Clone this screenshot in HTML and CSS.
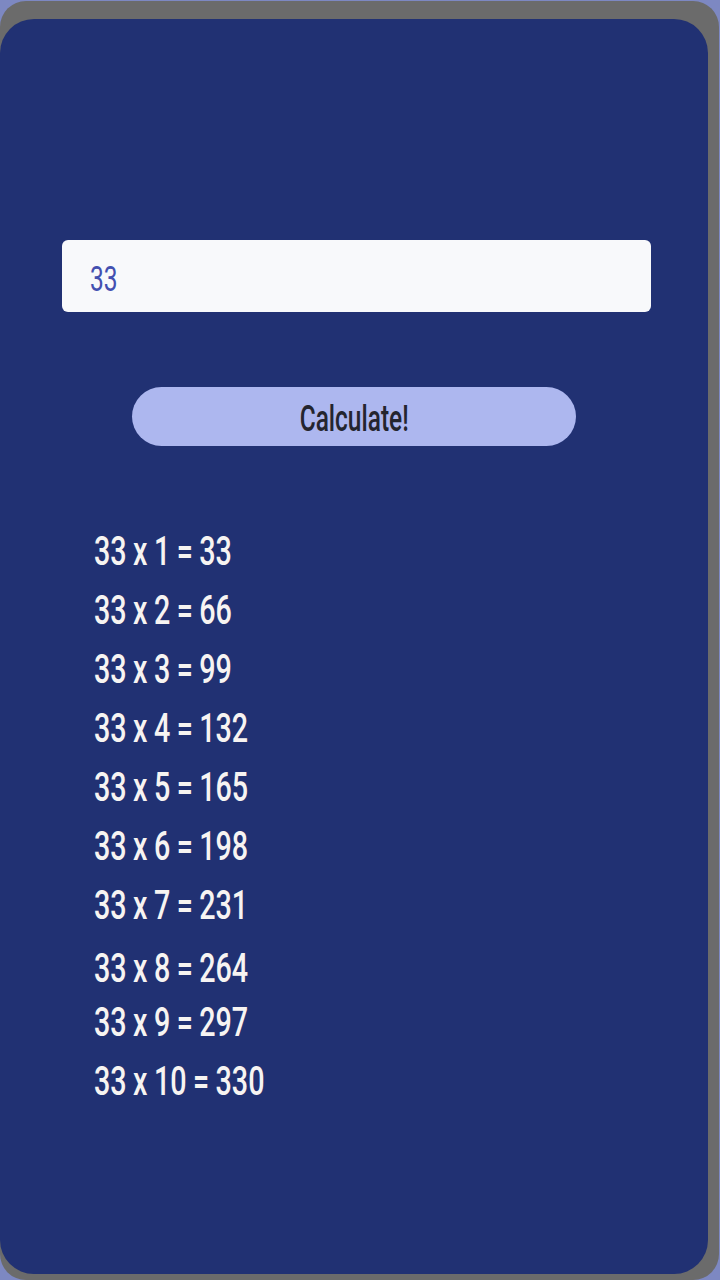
FILE: index.html
```html
<!DOCTYPE html>
<html>
<head>
<meta charset="utf-8">
<link rel="stylesheet" href="styles.css">
</head>
<body>
<div class="frame">
  <div class="screen">
    <div class="field"><span class="field-text">33</span></div>
    <button class="calc"><span class="calc-text">Calculate!</span></button>
    <ul class="results">
      <li><span>33 x 1 = 33</span></li>
      <li><span>33 x 2 = 66</span></li>
      <li><span>33 x 3 = 99</span></li>
      <li><span>33 x 4 = 132</span></li>
      <li><span>33 x 5 = 165</span></li>
      <li><span>33 x 6 = 198</span></li>
      <li><span>33 x 7 = 231</span></li>
      <li class="shift-down"><span>33 x 8 = 264</span></li>
      <li class="shift-up"><span>33 x 9 = 297</span></li>
      <li><span>33 x 10 = 330</span></li>
    </ul>
  </div>
</div>
</body>
</html>
```
FILE: styles.css
```css
html, body {
  margin: 0;
  padding: 0;
}
body {
  background: #7d88c2;
  width: 720px;
  height: 1280px;
  overflow: hidden;
  font-family: Roboto, "Liberation Sans", sans-serif;
}
.frame {
  margin-top: 1px;
  width: 719px;
  height: 1279px;
  box-sizing: border-box;
  background: #6b6b6b;
  border-radius: 26px;
  padding: 18px 11px 6px 0;
}
.screen {
  height: 100%;
  background: #213173;
  border-radius: 34px;
  padding-top: 221px;
  box-sizing: border-box;
}
.field {
  margin-left: 62px;
  width: 589px;
  height: 72px;
  background: #f8f9fb;
  border-radius: 6px;
  box-sizing: border-box;
  padding-left: 28px;
  display: flex;
  align-items: center;
}
.field-text {
  color: #4350b0;
  font-size: 35px;
  font-weight: 400;
  display: inline-block;
  transform: scaleX(0.7);
  transform-origin: left center;
  margin-top: 6px;
}
.calc {
  display: flex;
  align-items: center;
  justify-content: center;
  margin: 75px auto 0;
  width: 444px;
  height: 59px;
  border: none;
  border-radius: 30px;
  background: #adb7ef;
  padding: 0;
  font-family: inherit;
}
.calc-text {
  display: inline-block;
  color: #24252e;
  font-size: 36px;
  font-weight: 500;
  transform: scaleX(0.68);
  margin-top: 4px;
}
.results {
  list-style: none;
  margin: 76px 0 0;
  padding: 0 0 0 94px;
}
.results li {
  height: 59px;
  line-height: 59px;
  color: #f7f4f2;
  font-size: 41px;
  font-weight: 500;
}
.results li.shift-down {
  margin-top: 4px;
}
.results li.shift-up {
  margin-top: -5px;
}
.results li span {
  display: inline-block;
  transform: scaleX(0.7);
  transform-origin: left center;
  word-spacing: -1px;
}
```
